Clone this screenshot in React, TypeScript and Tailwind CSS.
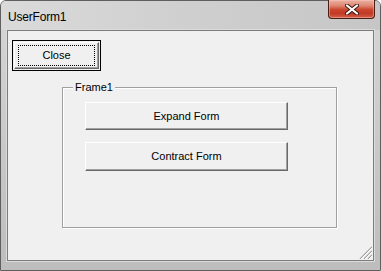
import React from 'react';

const font = { fontFamily: '"Liberation Sans", Arial, sans-serif' };

const ClassicButton = ({ label, className = '' }: { label: string; className?: string }) => (
  <button
    className={`flex items-center justify-center bg-[#f0f0f0] border-t border-l border-t-white border-l-white border-r border-b border-r-[#696969] border-b-[#696969] shadow-[inset_-1px_-1px_0_#a0a0a0] text-[11px] text-black ${className}`}
  >
    {label}
  </button>
);

const ResizeGrip = () => (
  <svg width="14" height="14" viewBox="0 0 14 14" className="absolute right-[1px] bottom-[1px]">
    {[0, 4, 8].map((o) => (
      <g key={o}>
        <line x1={2 + o} y1="14" x2="14" y2={2 + o} stroke="#a0a0a0" strokeWidth="1.2" />
        <line x1={3 + o} y1="14" x2="14" y2={3 + o} stroke="#ffffff" strokeWidth="1" />
      </g>
    ))}
  </svg>
);

export default function App() {
  return (
    <div className="w-[381px] h-[271px] overflow-hidden bg-white" style={font}>
      <div className="w-[381px] h-[271px] flex flex-col border border-[#5f5f5f] rounded-t-[6px] bg-gradient-to-b from-[#d6d6d6] to-[#bdbdbd]">
        {/* title bar */}
        <div className="h-[29px] flex items-start justify-between bg-gradient-to-r from-[#dadada] via-[#cfcfcf] to-[#c6c6c6] rounded-t-[5px]">
          <span className="pl-[7px] pt-[7px] text-[12px] tracking-[-0.2px] text-black">UserForm1</span>
          <div className="-mt-px mr-[5px] w-[47px] h-[19px] flex items-center justify-center rounded-b-[4px] border border-t-0 border-[#4a1c14] bg-[linear-gradient(to_bottom,#eab2a4_0%,#e08a76_30%,#c9432c_55%,#c23a24_75%,#d4604a_100%)] shadow-[inset_0_0_0_1px_rgba(255,200,190,0.45)]">
            <svg width="14" height="11" viewBox="0 0 14 11">
              <path d="M2 1.5 L12 9.5 M12 1.5 L2 9.5" stroke="#3a1712" strokeWidth="4" strokeLinecap="round" />
              <path d="M2 1.5 L12 9.5 M12 1.5 L2 9.5" stroke="#ffffff" strokeWidth="2.2" strokeLinecap="round" />
            </svg>
          </div>
        </div>

        {/* client area */}
        <div className="relative mx-[6px] h-[231px] bg-[#f0f0f0] border border-[#7c7c7c] shadow-[0_0_0_1px_#dcdcdc]">
          <div className="pl-[4px] pt-[9px]">
            <button className="w-[89px] h-[31px] border border-black bg-[#f0f0f0] p-[1px]">
              <span className="flex h-full w-full items-center justify-center border-t border-l border-white border-r-[#696969] border-b-[#696969] border-r border-b shadow-[inset_-1px_-1px_0_#a0a0a0]">
                <span className="flex h-[21px] w-[77px] items-center justify-center border border-dotted border-black text-[11px] text-black">
                  Close
                </span>
              </span>
            </button>
          </div>

          {/* Frame1 */}
          <div className="relative ml-[54px] mt-[16px] w-[275px] h-[141px] border border-[#a0a0a0] shadow-[inset_1px_1px_0_#ffffff,1px_1px_0_#ffffff]">
            <span className="absolute left-[10px] -top-[8px] px-[2px] bg-[#f0f0f0] text-[11px] leading-[14px] text-black">
              Frame1
            </span>
            <div className="flex flex-col gap-[12px] pl-[22px] pt-[14px]">
              <ClassicButton label="Expand Form" className="w-[203px] h-[28px]" />
              <ClassicButton label="Contract Form" className="w-[203px] h-[29px]" />
            </div>
          </div>

          <ResizeGrip />
        </div>
      </div>
    </div>
  );
}
